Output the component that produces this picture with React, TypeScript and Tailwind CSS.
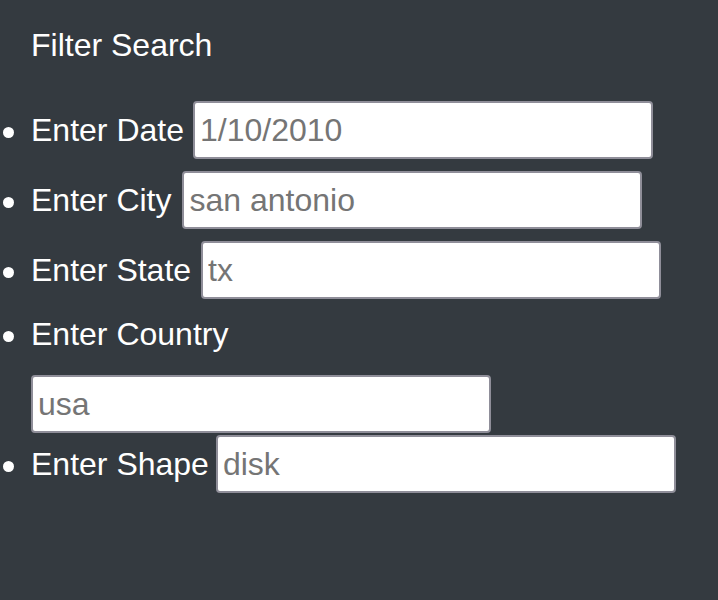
import React from "react";

const fields = [
  { label: "Enter Date", placeholder: "1/10/2010", gap: "mr-[9px]" },
  { label: "Enter City", placeholder: "san antonio", gap: "mr-[11px]" },
  { label: "Enter State", placeholder: "tx", gap: "mr-[10px]" },
];

function Bullet() {
  return <span className="mt-[4px] ml-[3px] mr-[17px] h-[11px] w-[11px] shrink-0 rounded-full bg-white" />;
}

function FilterInput({ placeholder }: { placeholder: string }) {
  return (
    <input
      type="text"
      placeholder={placeholder}
      className="h-[58px] w-[460px] rounded-[4px] border-2 border-[#8f8e99] bg-white px-[5px] text-[32px] text-[#757575] placeholder:text-[#757575] outline-none"
    />
  );
}

export default function App() {
  return (
    <div className="min-h-screen bg-[#343a40] font-['Liberation_Sans',Arial,sans-serif] text-[32px] text-white">
      {/* Heading */}
      <div className="pt-[25px] pl-[31px]">
        <h2 className="leading-[40px]">Filter Search</h2>
      </div>

      {/* Filters */}
      <ul className="mt-[36px] w-[690px]">
        {fields.map((f, i) => (
          <li key={f.label} className={`flex h-[58px] items-center ${i > 0 ? "mt-[12px]" : ""}`}>
            <Bullet />
            <span className={`${f.gap} leading-[40px]`}>{f.label}</span>
            <FilterInput placeholder={f.placeholder} />
          </li>
        ))}

        <li className="mt-[15px]">
          <div className="flex h-[40px] items-center">
            <Bullet />
            <span className="leading-[40px]">Enter Country</span>
          </div>
          <div className="mt-[21px] pl-[31px]">
            <FilterInput placeholder="usa" />
          </div>
        </li>

        <li className="mt-[2px] flex h-[58px] items-center">
          <Bullet />
          <span className="mr-[7px] leading-[40px]">Enter Shape</span>
          <FilterInput placeholder="disk" />
        </li>
      </ul>
    </div>
  );
}
